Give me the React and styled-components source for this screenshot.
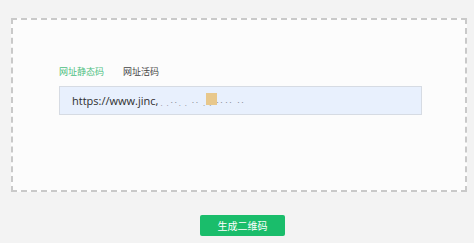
import styled, { createGlobalStyle } from "styled-components";

const GlobalStyle = createGlobalStyle`
  html, body {
    margin: 0;
    padding: 0;
    background: #f3f3f3;
    font-family: "Open Sans", "Noto Sans CJK SC", sans-serif;
  }
`;

const Page = styled.div`
  width: 474px;
  height: 243px;
  padding: 18px 7px 0 11px;
  box-sizing: border-box;
  display: flex;
  flex-direction: column;
`;

const DashedBox = styled.div`
  height: 174px;
  box-sizing: border-box;
  border: 2px dashed #c9c9c9;
  background: #fcfcfc;
  padding: 45px 0 0 46px;
  display: flex;
  flex-direction: column;
  gap: 9px;
`;

const Tabs = styled.div`
  display: flex;
  gap: 19px;
  height: 12px;
  align-items: center;
`;

const Tab = styled.span`
  font-size: 9px;
  color: ${(p) => (p.$active ? "#4cbf7f" : "#444")};
  font-family: "Noto Sans CJK SC", sans-serif;
`;

const UrlBox = styled.div`
  position: relative;
  width: 363px;
  height: 29px;
  box-sizing: border-box;
  border: 1px solid #d6dbe3;
  background: #e8f0fd;
  padding: 0 0 0 12px;
  display: flex;
  align-items: center;
  font-size: 11px;
  color: #2e2e2e;
`;

const Hidden = styled.span`
  color: #8e9198;
  font-size: 8px;
  letter-spacing: 1px;
  margin-left: 2px;
  transform: translateY(2px);
`;

const Marker = styled.span`
  position: absolute;
  left: 146px;
  top: 6px;
  width: 11px;
  height: 12px;
  background: #e8c88c;
`;

const Footer = styled.div`
  display: flex;
  justify-content: center;
  padding: 23px 0 0 7px;
`;

const Button = styled.button`
  width: 85px;
  height: 21px;
  border: none;
  border-radius: 2px;
  background: #1abd6b;
  color: #fff;
  font-size: 10px;
  font-family: "Noto Sans CJK SC", sans-serif;
  padding: 0;
  cursor: pointer;
`;

export default function App() {
  return (
    <>
      <GlobalStyle />
      <Page>
        <DashedBox>
          <Tabs>
            <Tab $active>网址静态码</Tab>
            <Tab>网址活码</Tab>
          </Tabs>
          <UrlBox>
            https://www.jinc,
            <Hidden>. .‥. . ‥ . . ‥‥ ‥</Hidden>
            <Marker />
          </UrlBox>
        </DashedBox>
        <Footer>
          <Button>生成二维码</Button>
        </Footer>
      </Page>
    </>
  );
}
